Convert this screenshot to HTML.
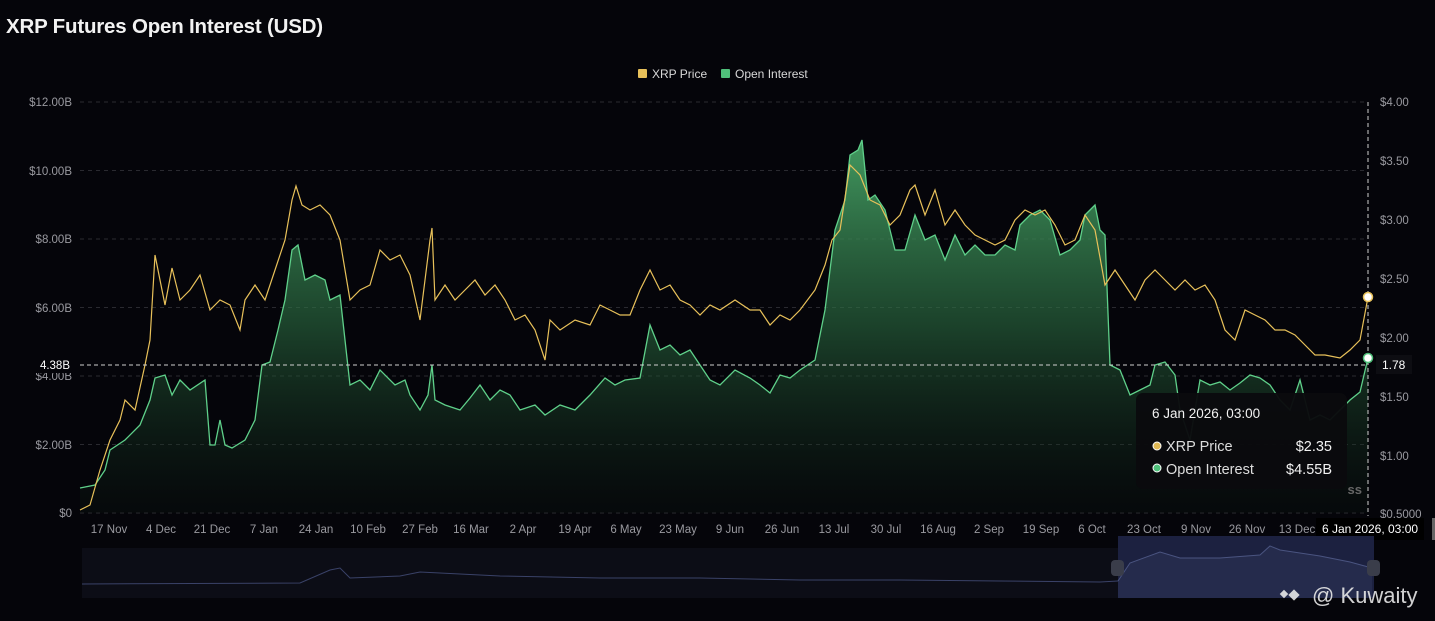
<!DOCTYPE html>
<html><head><meta charset="utf-8"><style>
html,body{margin:0;padding:0;background:#05050a;width:1435px;height:621px;overflow:hidden;font-family:"Liberation Sans",sans-serif}
.t{position:absolute;left:6px;top:15px;color:#f2f2f2;font-weight:bold;font-size:20.5px;letter-spacing:-0.2px}
</style></head><body>
<div class="t">XRP Futures Open Interest (USD)</div>
<svg width="1435" height="621" style="position:absolute;left:0;top:0" font-family="Liberation Sans, sans-serif">
<defs>
<linearGradient id="g" x1="0" y1="0" x2="0" y2="1">
<stop offset="0" stop-color="#46a265" stop-opacity="0.95"/>
<stop offset="0.5" stop-color="#2a6a40" stop-opacity="0.6"/>
<stop offset="1" stop-color="#0b1a10" stop-opacity="0.2"/>
</linearGradient>
</defs>
<rect x="638" y="69" width="9" height="9" fill="#e8c15a" rx="1"/>
<text x="652" y="78" fill="#d8d8d8" font-size="12">XRP Price</text>
<rect x="721" y="69" width="9" height="9" fill="#4fc07a" rx="1"/>
<text x="735" y="78" fill="#d8d8d8" font-size="12">Open Interest</text>
<g stroke="#2a2a30" stroke-dasharray="4,4" stroke-width="1">
<line x1="80" y1="102" x2="1368" y2="102"/><line x1="80" y1="170.5" x2="1368" y2="170.5"/>
<line x1="80" y1="239" x2="1368" y2="239"/><line x1="80" y1="307.5" x2="1368" y2="307.5"/>
<line x1="80" y1="376" x2="1368" y2="376"/><line x1="80" y1="444.5" x2="1368" y2="444.5"/>
<line x1="80" y1="513" x2="1368" y2="513"/>
</g>
<g fill="#9a9aa0" font-size="11.5" text-anchor="end">
<text x="72" y="106">$12.00B</text><text x="72" y="175">$10.00B</text><text x="72" y="243">$8.00B</text>
<text x="72" y="312">$6.00B</text><text x="72" y="380">$4.00B</text><text x="72" y="449">$2.00B</text><text x="72" y="517">$0</text>
</g>
<g fill="#9a9aa0" font-size="11.5">
<text x="1380" y="106">$4.00</text><text x="1380" y="165">$3.50</text><text x="1380" y="224">$3.00</text>
<text x="1380" y="283">$2.50</text><text x="1380" y="342">$2.00</text><text x="1380" y="401">$1.50</text>
<text x="1380" y="460">$1.00</text><text x="1380" y="518">$0.5000</text>
</g>
<polygon fill="url(#g)" points="80,513 80,488 95,485 105,470 110,450 125,440 140,425 150,400 155,378 165,375 172,395 180,380 190,390 205,380 210,445 215,445 220,420 225,445 232,448 245,440 255,420 262,365 270,362 278,330 285,300 292,250 298,245 305,280 315,275 325,280 330,300 340,295 350,385 360,380 370,390 380,370 395,385 405,380 410,395 420,410 428,395 432,365 435,400 445,405 460,410 470,398 480,385 490,400 500,390 510,395 520,410 535,405 545,415 560,405 575,410 590,395 605,378 615,385 625,380 640,378 650,325 660,350 670,345 680,355 690,350 700,365 710,380 720,385 735,370 750,378 760,385 770,393 780,375 790,378 800,370 815,360 825,310 835,230 845,200 850,155 858,150 862,140 868,200 875,195 885,210 895,250 905,250 915,215 925,240 935,235 945,260 955,235 965,255 975,245 985,255 995,255 1005,245 1015,250 1020,225 1030,215 1040,210 1050,220 1060,255 1070,250 1080,240 1085,215 1095,205 1100,230 1105,235 1110,365 1120,370 1130,395 1140,390 1150,385 1155,365 1165,362 1175,375 1180,410 1190,440 1200,380 1210,385 1220,382 1230,390 1240,383 1250,375 1260,378 1270,385 1280,400 1290,410 1300,380 1310,420 1320,415 1330,420 1340,410 1350,400 1360,392 1368,358 1368,513"/>
<polyline fill="none" stroke="#5fd08a" stroke-width="1.3" points="80,488 95,485 105,470 110,450 125,440 140,425 150,400 155,378 165,375 172,395 180,380 190,390 205,380 210,445 215,445 220,420 225,445 232,448 245,440 255,420 262,365 270,362 278,330 285,300 292,250 298,245 305,280 315,275 325,280 330,300 340,295 350,385 360,380 370,390 380,370 395,385 405,380 410,395 420,410 428,395 432,365 435,400 445,405 460,410 470,398 480,385 490,400 500,390 510,395 520,410 535,405 545,415 560,405 575,410 590,395 605,378 615,385 625,380 640,378 650,325 660,350 670,345 680,355 690,350 700,365 710,380 720,385 735,370 750,378 760,385 770,393 780,375 790,378 800,370 815,360 825,310 835,230 845,200 850,155 858,150 862,140 868,200 875,195 885,210 895,250 905,250 915,215 925,240 935,235 945,260 955,235 965,255 975,245 985,255 995,255 1005,245 1015,250 1020,225 1030,215 1040,210 1050,220 1060,255 1070,250 1080,240 1085,215 1095,205 1100,230 1105,235 1110,365 1120,370 1130,395 1140,390 1150,385 1155,365 1165,362 1175,375 1180,410 1190,440 1200,380 1210,385 1220,382 1230,390 1240,383 1250,375 1260,378 1270,385 1280,400 1290,410 1300,380 1310,420 1320,415 1330,420 1340,410 1350,400 1360,392 1368,358"/>
<polyline fill="none" stroke="#e8c15a" stroke-width="1.2" points="80,510 90,505 100,470 110,440 120,420 125,400 135,410 145,365 150,340 155,255 160,280 165,305 172,268 180,300 190,290 200,275 210,310 220,300 230,305 240,330 245,300 255,285 265,300 275,270 285,240 292,200 296,186 302,205 310,210 320,205 330,215 340,240 350,300 360,290 370,285 380,250 390,260 400,255 410,275 420,320 430,240 432,228 435,300 445,285 455,300 465,290 475,280 485,295 495,285 505,300 515,320 525,315 535,330 545,360 550,320 560,330 575,320 590,325 600,305 610,310 620,315 630,315 640,290 650,270 660,290 670,285 680,300 690,305 700,315 710,305 720,310 735,300 750,310 760,310 770,325 780,315 790,320 800,310 815,290 825,265 832,240 840,230 850,165 860,175 870,200 880,205 890,225 900,215 910,190 915,185 925,215 935,190 945,225 955,210 965,225 975,235 985,240 995,245 1005,240 1015,220 1025,210 1035,215 1045,210 1055,225 1065,245 1075,240 1085,215 1095,230 1105,285 1115,270 1125,285 1135,300 1145,280 1155,270 1165,280 1175,290 1185,280 1195,290 1205,285 1215,300 1225,330 1235,340 1245,310 1255,315 1265,320 1275,330 1285,330 1295,335 1305,345 1315,355 1325,355 1340,358 1350,350 1360,340 1368,297"/>
<line x1="80" y1="365" x2="1368" y2="365" stroke="#cfcfcf" stroke-dasharray="4,3"/>
<line x1="1368" y1="102" x2="1368" y2="516" stroke="#cfcfcf" stroke-dasharray="4,3"/>
<rect x="30" y="357" width="44" height="16" fill="#05050a"/>
<text x="70" y="369" fill="#fff" font-size="11.5" text-anchor="end">4.38B</text>
<rect x="1376" y="355" width="36" height="19" fill="#0d0d12"/>
<text x="1382" y="369" fill="#fff" font-size="12">1.78</text>
<circle cx="1368" cy="297" r="4.5" fill="#fff" stroke="#e8c15a" stroke-width="1.5"/>
<circle cx="1368" cy="358" r="4.5" fill="#fff" stroke="#4fc07a" stroke-width="1.5"/>
<rect x="1136" y="393" width="211" height="96" rx="7" fill="#0a0a0e" opacity="0.96"/>
<text x="1152" y="418" fill="#f2f2f2" font-size="13.5">6 Jan 2026, 03:00</text>
<circle cx="1157" cy="446" r="4" fill="#e0b854" stroke="#fff" stroke-width="1"/>
<text x="1166" y="451" fill="#ddd" font-size="14.5">XRP Price</text>
<text x="1332" y="451" fill="#f2f2f2" font-size="14.5" text-anchor="end">$2.35</text>
<circle cx="1157" cy="468" r="4" fill="#4fc07a" stroke="#fff" stroke-width="1"/>
<text x="1166" y="474" fill="#ddd" font-size="14.5">Open Interest</text>
<text x="1332" y="474" fill="#f2f2f2" font-size="14.5" text-anchor="end">$4.55B</text>
<text x="1362" y="494" fill="#666" font-size="13" font-weight="bold" text-anchor="end">ss</text>
<g fill="#9a9aa0" font-size="11.5" text-anchor="middle">
<text x="109" y="533">17 Nov</text><text x="161" y="533">4 Dec</text><text x="212" y="533">21 Dec</text>
<text x="264" y="533">7 Jan</text><text x="316" y="533">24 Jan</text><text x="368" y="533">10 Feb</text>
<text x="420" y="533">27 Feb</text><text x="471" y="533">16 Mar</text><text x="523" y="533">2 Apr</text>
<text x="575" y="533">19 Apr</text><text x="626" y="533">6 May</text><text x="678" y="533">23 May</text>
<text x="730" y="533">9 Jun</text><text x="782" y="533">26 Jun</text><text x="834" y="533">13 Jul</text>
<text x="886" y="533">30 Jul</text><text x="938" y="533">16 Aug</text><text x="989" y="533">2 Sep</text>
<text x="1041" y="533">19 Sep</text><text x="1092" y="533">6 Oct</text><text x="1144" y="533">23 Oct</text>
<text x="1196" y="533">9 Nov</text><text x="1247" y="533">26 Nov</text><text x="1297" y="533">13 Dec</text>
</g>
<rect x="1316" y="518" width="108" height="22" fill="#000"/>
<text x="1370" y="533" fill="#fff" font-size="12" text-anchor="middle">6 Jan 2026, 03:00</text>
<rect x="1432" y="518" width="3" height="22" fill="#666"/>
<rect x="82" y="548" width="1036" height="50" fill="#0c0d16"/>
<rect x="1118" y="536" width="256" height="62" fill="#1c2140"/>
<polygon fill="#252b4c" points="1118,598 1118,581 1130,563 1160,552 1180,558 1220,558 1260,555 1270,546 1280,550 1320,556 1350,562 1372,568 1372,598"/>
<polyline fill="none" stroke="#3a4268" stroke-width="1" points="82,584 300,583 330,570 340,568 350,578 400,576 420,572 500,576 600,578 700,578 800,580 900,580 1000,581 1100,582 1118,581"/>
<polyline fill="none" stroke="#4a5480" stroke-width="1" points="1118,581 1130,563 1160,552 1180,558 1220,558 1260,555 1270,546 1280,550 1320,556 1350,562 1372,568"/>
<rect x="1111" y="560" width="13" height="16" rx="4" fill="#3a3d4a"/>
<rect x="1367" y="560" width="13" height="16" rx="4" fill="#3a3d4a"/>
<g transform="translate(1294,595)" fill="#e8e8e8" opacity="0.9">
<rect x="-4" y="-4" width="8" height="8" transform="rotate(45)"/>
<rect x="-13" y="-4" width="6" height="6" transform="rotate(45 -10 -1)"/>
</g>
<text x="1312" y="603" fill="#e8e8e8" font-size="22" opacity="0.9">@ Kuwaity</text>
</svg>
</body></html>
